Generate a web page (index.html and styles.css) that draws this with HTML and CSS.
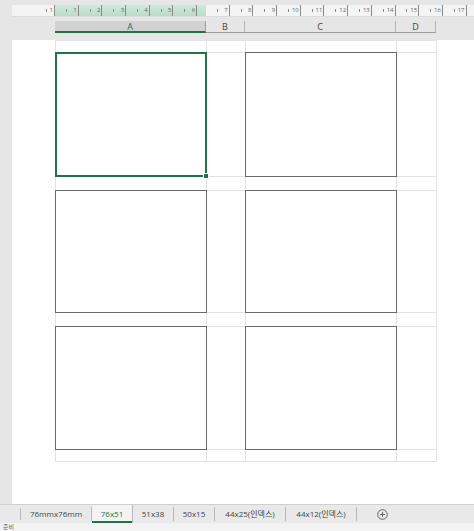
FILE: index.html
```html
<!DOCTYPE html>
<html lang="ko">
<head>
    <meta charset="UTF-8">
    <title>76x51 - Label sheet</title>
    <link rel="stylesheet" href="styles.css">
</head>
<body>
    <div class="app">
        <div class="ruler">
            <div class="ruler-band">
                <div class="ruler-margin">
                    <span class="tick num">1</span>
                </div>
                <div class="ruler-sel">
                    <span class="tick num">1</span><span class="tick num">2</span><span class="tick num">3</span>
                    <span class="tick num">4</span><span class="tick num">5</span><span class="tick num">6</span>
                </div>
                <div class="ruler-rest">
                    <span class="tick num">7</span><span class="tick num">8</span><span class="tick num">9</span>
                    <span class="tick num">10</span><span class="tick num">11</span><span class="tick num">12</span>
                    <span class="tick num">13</span><span class="tick num">14</span><span class="tick num">15</span>
                    <span class="tick num">16</span><span class="tick num">17</span>
                </div>
            </div>
        </div>

        <div class="col-heads">
            <div class="col-head active col-a">A</div>
            <div class="col-head col-b">B</div>
            <div class="col-head col-c">C</div>
            <div class="col-head col-d">D</div>
        </div>

        <div class="page">
            <div class="sheet">
                <div class="cell"></div><div class="cell"></div><div class="cell"></div><div class="cell"></div>
                <div class="cell box selected"><span class="handle"></span></div><div class="cell"></div><div class="cell box"></div><div class="cell"></div>
                <div class="cell"></div><div class="cell"></div><div class="cell"></div><div class="cell"></div>
                <div class="cell box"></div><div class="cell"></div><div class="cell box"></div><div class="cell"></div>
                <div class="cell"></div><div class="cell"></div><div class="cell"></div><div class="cell"></div>
                <div class="cell box"></div><div class="cell"></div><div class="cell box"></div><div class="cell"></div>
                <div class="cell"></div><div class="cell"></div><div class="cell"></div><div class="cell"></div>
            </div>
        </div>

        <div class="tabs">
            <div class="tab-nav"></div>
            <div class="tab t-wide">76mmx76mm</div>
            <div class="tab active">76x51</div>
            <div class="tab">51x38</div>
            <div class="tab">50x15</div>
            <div class="tab t-wide">44x25(인덱스)</div>
            <div class="tab t-wide">44x12(인덱스)</div>
            <div class="tab-add">
                <svg width="11" height="11" viewBox="0 0 11 11">
                    <circle cx="5.5" cy="5.5" r="4.8" fill="none" stroke="#666" stroke-width="1"/>
                    <path d="M5.5 3v5M3 5.5h5" stroke="#666" stroke-width="1"/>
                </svg>
            </div>
        </div>
        <div class="status">준비</div>
    </div>
</body>
</html>
```

FILE: styles.css
```css
body {
    margin: 0;
    font-family: "Open Sans", "Noto Sans CJK KR", sans-serif;
    background: #e6e6e6;
}
.app {
    width: 474px;
    height: 531px;
    display: flex;
    flex-direction: column;
    background: #e6e6e6;
    overflow: hidden;
}

/* ruler */
.ruler {
    height: 17px;
    flex: none;
    padding-top: 5px;
    box-sizing: border-box;
}
.ruler-band {
    margin-left: 12px;
    height: 11px;
    display: flex;
    background: #f4f4f4;
    border-bottom: 1px solid #dcdcdc;
}
.ruler-margin {
    width: 43px;
    display: flex;
    justify-content: flex-end;
}
.ruler-sel {
    width: 151px;
    display: flex;
    background: linear-gradient(#cfe8dc, #b9dcc9);
}
.ruler-rest {
    flex: 1;
    display: flex;
}
.tick {
    width: 23.7px;
    flex: none;
    box-sizing: border-box;
    font-size: 6px;
    line-height: 11px;
    color: #666;
    text-align: right;
    padding-right: 1px;
    border-right: 1px solid #8a8a8a;
    background: linear-gradient(#8a8a8a, #8a8a8a) no-repeat 50% 4px / 1px 3px;
}
.ruler-margin .tick {
    width: 17px;
}

/* column headers */
.col-heads {
    height: 23px;
    flex: none;
    display: flex;
    padding: 4px 0 0 55px;
    box-sizing: border-box;
}
.col-head {
    height: 12px;
    box-sizing: border-box;
    font-size: 9px;
    line-height: 11px;
    text-align: center;
    color: #444;
    border-right: 1px solid #b4b4b4;
    border-bottom: 1px solid #9c9c9c;
}
.col-head.active {
    background: #d2d2d2;
    color: #217346;
    border-bottom: 2px solid #217346;
    border-right-color: #9c9c9c;
}
.col-a { width: 151px; }
.col-b { width: 39px; }
.col-c { width: 151px; }
.col-d { width: 40px; }

/* page */
.page {
    flex: 1;
    margin-left: 12px;
    background: #fff;
    padding-left: 43px;
}
.sheet {
    display: grid;
    width: max-content;
    grid-template-columns: 150px 38px 150px 39px;
    grid-template-rows: 11px 123px 13px 121px 13px 122px 11px;
    gap: 1px;
    padding: 1px;
    background: #e2e2e2;
}
.cell {
    background: #fff;
    position: relative;
}
.box {
    box-shadow: 0 0 0 1px #6a6a6a;
    z-index: 1;
}
.box.selected {
    box-shadow: 0 0 0 1px #217346, inset 0 0 0 1px #217346;
    z-index: 2;
}
.handle {
    position: absolute;
    right: -3px;
    bottom: -3px;
    width: 4px;
    height: 4px;
    background: #217346;
    border: 1px solid #fff;
}

/* sheet tabs */
.tabs {
    height: 18px;
    flex: none;
    display: flex;
    align-items: stretch;
    border-top: 1px solid #d0d0d0;
    background: #e9e9e9;
    font-size: 8px;
    color: #444;
}
.tab-nav {
    width: 20px;
    border-right: 1px solid #b8b8b8;
    margin: 3px 0;
}
.tab {
    width: 40px;
    text-align: center;
    border-right: 1px solid #b8b8b8;
    margin: 2px 0;
    line-height: 13px;
}
.tab.t-wide {
    width: 70px;
}
.tab.active {
    margin: 0;
    line-height: 17px;
    background: #f3f3f3;
    color: #217346;
    box-shadow: inset 0 -2px 0 #217346;
}
.tab-add {
    padding-left: 20px;
    display: flex;
    align-items: center;
}
.status {
    height: 8px;
    flex: none;
    font-size: 6px;
    line-height: 8px;
    color: #666;
    padding-left: 3px;
    background: #f3f3f3;
}
```
